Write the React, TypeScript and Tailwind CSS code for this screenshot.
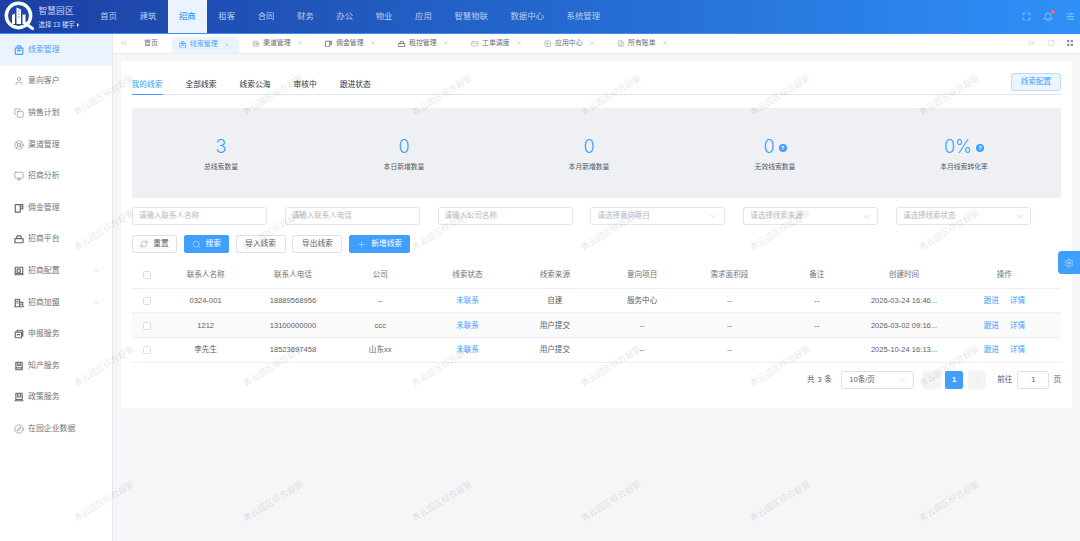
import React from "react";
import { User, Copy, LifeBuoy, Monitor, ChevronDown, Compass, X, ChevronsLeft, ChevronsRight, RotateCw, RefreshCw, Search, Plus, ChevronLeft, ChevronRight, Maximize, Bell, SlidersHorizontal, Settings, LayoutGrid, FileText, Grid2x2, CreditCard } from "lucide-react";

function mk(d: string) {
  return function Ic({ size = 10, strokeWidth = 1.2, className = "" }: { size?: number; strokeWidth?: number; className?: string }) {
    return (
      <svg width={size} height={size} viewBox="0 0 16 16" fill="none" stroke="currentColor" strokeWidth={strokeWidth * 1.6} strokeLinecap="round" strokeLinejoin="round" className={className}>
        <path d={d} />
      </svg>
    );
  };
}
const BoxIc = mk("M2 5h12v9a1 1 0 0 1-1 1H3a1 1 0 0 1-1-1zM5 5V2.5A1 1 0 0 1 6 1.5h4a1 1 0 0 1 1 1V5M8 4v5M5.5 9h5");
const PageIc = mk("M2 2.5h8v12H2zM10 2.5h4v7h-4M10 6h3");
const TrayIc = mk("M1.5 7.5h13V14h-13zM4 7.5L5 3h6l1 4.5");
const CfgIc = mk("M2 2h12v12H2zM5 5h5v5H5zM2 12h12");
const BldIc = mk("M2 14V2h7v12M9 7h5v7M1 14h14M4.5 5h2M4.5 8h2M11 10h1");
const StackIc = mk("M2 5h10v9H2zM5 5V2h9v9h-2M5 9h4");
const BookIc = mk("M3 2h10v12H3zM6 2v5h4V2M3 11h10");
const BookIc2 = mk("M3 2h10v10H3zM6 2v6h4V2M1.5 14h13");

const nav = ["首页","建筑","招商","租客","合同","财务","办公","物业","应用","智慧物联","数据中心","系统管理"];
const side: [string, any, boolean?][] = [
  ["线索管理", BoxIc],["意向客户", User],["销售计划", Copy],["渠道管理", LifeBuoy],["招商分析", Monitor],["佣金管理", PageIc],["招商平台", TrayIc],["招商配置", CfgIc, true],["招商加盟", BldIc, true],["申报服务", StackIc],["知产服务", BookIc],["政策服务", BookIc2],["在园企业数据", Compass],
];
const tabs: [string, any][] = [["渠道管理", LifeBuoy],["佣金管理", PageIc],["租控管理", TrayIc],["工单调度", CreditCard],["应用中心", Grid2x2],["所有账单", FileText]];
const rows = [
  ["0324-001","18889568956","--","未联系","自建","服务中心","--","--","2026-03-24 16:46..."],
  ["1212","13100000000","ccc","未联系","用户提交","--","--","--","2026-03-02 09:16..."],
  ["李先生","18523697458","山东xx","未联系","用户提交","--","--","","2025-10-24 16:13..."],
];
const heads = ["联系人名称","联系人电话","公司","线索状态","线索来源","意向项目","需求面积段","备注","创建时间","操作"];
const wmX = [104,273,442,611,780,949];
const wmY = [95,230,366,501];

function Logo() {
  return (
    <svg width="31" height="31" viewBox="0 0 31 31" className="shrink-0">
      <circle cx="14.5" cy="14.5" r="12.2" fill="#1d47ad" stroke="#fff" strokeWidth="3.4" />
      <path d="M21.5 22.5l7 5" stroke="#fff" strokeWidth="3.2" strokeLinecap="round" />
      <path d="M8 23v-9l3-1.5V23zM12.5 23V6.5l4.5 2V23zM18.5 23v-9.5h3V23z" fill="#fff" />
      <path d="M14 10h1.6M14 13h1.6M14 16h1.6" stroke="#1d47ad" strokeWidth="0.7" />
    </svg>
  );
}

function Field({ text, select }: { text: string; select?: boolean }) {
  return (
    <div className="w-[135px] h-[18px] border border-[#e2e4ea] rounded-[3px] bg-white flex items-center justify-between pl-[6px] pr-[6px] text-[7.5px] text-[#b4b8c0]">
      <span>{text}</span>
      {select && <ChevronDown size={9} strokeWidth={1.2} className="text-[#a8abb2]" />}
    </div>
  );
}

function Stat({ n, label, help }: { n: string; label: string; help?: boolean }) {
  return (
    <div className="flex flex-col items-center">
      <div className="flex items-center h-[24px]">
        <span className="font-[Inter] font-light text-[18px] leading-[24px] text-[#409eff]">{n}</span>
        {help && <span className="ml-[4px] mt-[2px] w-[8px] h-[8px] rounded-full bg-[#409eff] text-white text-[6px] leading-[8px] text-center font-bold">?</span>}
      </div>
      <div className="text-[6.8px] leading-[10px] mt-[3px] text-[#555a63]">{label}</div>
    </div>
  );
}

function Btn({ w, children, primary }: { w: string; children: React.ReactNode; primary?: boolean }) {
  return (
    <div className={`${w} h-[18px] rounded-[2px] border flex items-center justify-center gap-[5px] text-[7.7px] ${primary ? "bg-[#409eff] border-[#409eff] text-white" : "bg-white border-[#e0e2e8] text-[#5c6068]"}`}>{children}</div>
  );
}

function Box() {
  return <span className="inline-block w-[8px] h-[8px] border border-[#dcdfe6] rounded-[1.5px] bg-white align-middle" />;
}

export default function App() {
  return (
    <div className="relative w-[1080px] h-[541px] overflow-hidden bg-[#f5f6f8] flex flex-col text-[#5c6068]" style={{ fontFamily: '"Liberation Sans","Noto Sans CJK SC",sans-serif' }}>
      <header className="h-[34px] shrink-0 flex items-stretch bg-gradient-to-r from-[#1b3fa3] to-[#2f90f8] border-b border-[#3d8ef5]">
        <div className="w-[89px] shrink-0 flex items-center pl-[4px] gap-[3.5px]">
          <Logo />
          <div className="flex flex-col pt-[2px]">
            <span className="text-[8.6px] leading-[11px] text-[#c6d4f2] tracking-[0.2px]">智慧园区</span>
            <span className="text-[6.4px] leading-[10px] mt-[3px] text-[#d5e0f6] flex items-center">选择 13 楼宇<span className="ml-[2px] w-0 h-0 border-y-[2px] border-y-transparent border-l-[2.5px] border-l-white" /></span>
          </div>
        </div>
        <nav className="flex items-stretch">
          {nav.map((n) => (
            <div key={n} className={`px-[11.3px] flex items-center text-[8.4px] ${n === "招商" ? "bg-[#eaf3fe] text-[#3a9bff] font-medium" : "text-[#bccdf0]"}`}>{n}</div>
          ))}
        </nav>
        <div className="ml-auto flex items-center gap-[12.5px] pr-[5.5px] text-[#e4f0ff]">
          <Maximize size={9} strokeWidth={1.5} />
          <span className="relative">
            <Bell size={10} strokeWidth={1.3} className="block" />
            <span className="absolute -top-[2px] -right-[1.5px] w-[4px] h-[4px] rounded-full bg-[#f56c6c]" />
          </span>
          <SlidersHorizontal size={9} strokeWidth={1.3} />
        </div>
      </header>

      <div className="flex flex-1 min-h-0">
        <aside className="w-[113px] shrink-0 bg-white border-r border-[#e6e8ee] flex flex-col">
          {side.map(([t, I, arrow], i) => (
            <div key={t} className={`h-[31.6px] shrink-0 flex items-center pl-[14px] pr-[11px] text-[7.9px] ${i === 0 ? "bg-[#eaf3fe] text-[#4aa3ff]" : "text-[#70747c]"}`}>
              <I size={10} strokeWidth={1.2} className={`shrink-0 mr-[4px] ${i === 0 ? "text-[#4aa3ff]" : "text-[#666a72]"}`} />
              <span>{t}</span>
              {arrow && <ChevronDown size={9} strokeWidth={1.1} className="ml-auto text-[#a0a4ac]" />}
            </div>
          ))}
        </aside>

        <main className="flex-1 min-w-0 flex flex-col">
          <div className="h-[19.5px] shrink-0 bg-white border-b border-[#eceef2] flex items-end text-[6.9px] text-[#6a6e76]">
            <div className="w-[31px] h-full pl-[6px] flex items-center shrink-0"><ChevronsLeft size={10} strokeWidth={1.2} className="text-[#a4a8b0]" /></div>
            <div className="h-full flex items-center w-[28px] shrink-0">首页</div>
            <div className="h-[16px] w-[67px] shrink-0 rounded-t-[5px] bg-[#eaf3fe] text-[#4aa3ff] flex items-center pl-[7px]">
              <BoxIc size={7.5} strokeWidth={1} className="mr-[3.5px]" />
              <span>线索管理</span>
              <X size={6} strokeWidth={1} className="ml-[6px]" />
            </div>
            {tabs.map(([t, I]) => (
              <div key={t} className="h-full w-[73px] shrink-0 flex items-center pl-[13px]">
                <I size={7.5} strokeWidth={1.1} className="mr-[3.5px] shrink-0" />
                <span>{t}</span>
                <X size={6} strokeWidth={1.1} className="ml-[6px] text-[#777]" />
              </div>
            ))}
            <div className="ml-auto h-full flex items-center gap-[11px] pr-[6px] text-[#a4a8b0]">
              <ChevronsRight size={10} strokeWidth={1.2} />
              <RotateCw size={8} strokeWidth={1.1} />
              <LayoutGrid size={8} strokeWidth={0} fill="#8a8e96" />
            </div>
          </div>

          <div className="flex-1 min-h-0 pt-[7.5px] pl-[8px] pr-[8px]">
            <div className="bg-white w-[951px] h-[347px] rounded-[2px] pt-[12px] pl-[11px] pr-[11px]">
              <div className="flex h-[22px] items-start justify-between border-b border-[#dfe4ec]">
                <div className="flex gap-[23px] text-[7.75px] text-[#303338] pt-[6px] -ml-[0.5px]">
                  {["我的线索","全部线索","线索公海","审核中","跟进状态"].map((t, i) => (
                    <div key={t} className={`h-[16px] leading-[12px] ${i === 0 ? "text-[#409eff] border-b-[1.5px] border-[#409eff]" : ""}`}>{t}</div>
                  ))}
                </div>
                <div className="w-[50px] h-[18px] bg-[#ecf5ff] border border-[#bcdcff] rounded-[3px] text-[#409eff] text-[7.6px] flex items-center justify-center">线索配置</div>
              </div>

              <div className="mt-[13px] h-[90px] bg-[#eff0f4] grid grid-cols-[178px_188px_182px_190px_188px] items-center">
                <Stat n="3" label="总线索数量" />
                <Stat n="0" label="本日新增数量" />
                <Stat n="0" label="本月新增数量" />
                <Stat n="0" label="无效线索数量" help />
                <Stat n="0%" label="本月线索转化率" help />
              </div>

              <div className="mt-[9px] flex gap-[17.8px]">
                <Field text="请输入联系人名称" />
                <Field text="请输入联系人电话" />
                <Field text="请输入公司名称" />
                <Field text="请选择意向项目" select />
                <Field text="请选择线索来源" select />
                <Field text="请选择线索状态" select />
              </div>

              <div className="mt-[10px] flex gap-[6.8px]">
                <Btn w="w-[45px]"><RefreshCw size={8} strokeWidth={1.1} />重置</Btn>
                <Btn w="w-[45px]" primary><Search size={9} strokeWidth={1.1} />搜索</Btn>
                <Btn w="w-[50px]">导入线索</Btn>
                <Btn w="w-[50px]">导出线索</Btn>
                <Btn w="w-[61px]" primary><Plus size={9} strokeWidth={1.1} />新增线索</Btn>
              </div>

              <table className="mt-[9px] w-[929px] table-fixed text-[7.6px] text-center">
                <colgroup>
                  <col className="w-[30px]" />
                  {Array.from({ length: 9 }).map((_, i) => <col key={i} className="w-[87.3px]" />)}
                  <col />
                </colgroup>
                <thead>
                  <tr className="h-[26px] border-b border-[#ebeef5] text-[#707479]">
                    <th className="font-normal"><Box /></th>
                    {heads.map((h) => <th key={h} className="font-normal">{h}</th>)}
                  </tr>
                </thead>
                <tbody>
                  {rows.map((r, i) => (
                    <tr key={i} className={`h-[24.8px] border-b border-[#ebeef5] text-[#5c6068] ${i === 1 ? "bg-[#fafafa]" : ""}`}>
                      <td><Box /></td>
                      {r.map((c, j) => <td key={j} className={j === 3 ? "text-[#409eff]" : ""}>{c}</td>)}
                      <td className="text-[#409eff]"><span className="mr-[11px]">跟进</span><span>详情</span></td>
                    </tr>
                  ))}
                </tbody>
              </table>

              <div className="mt-[8px] flex items-center justify-end h-[18px] text-[7.6px] text-[#5c6068]">
                <span className="mr-[9px] tracking-[0.3px]">共 3 条</span>
                <div className="w-[73px] h-[18px] border border-[#dcdfe6] rounded-[3px] flex items-center justify-between pl-[7px] pr-[6px] mr-[9px]"><span>10条/页</span><ChevronDown size={9} strokeWidth={1} className="text-[#a8abb2]" /></div>
                <div className="w-[18px] h-[18px] bg-[#f4f4f5] rounded-[2px] flex items-center justify-center mr-[4px]"><ChevronLeft size={7} strokeWidth={1} className="text-[#c0c4cc]" /></div>
                <div className="w-[18px] h-[18px] bg-[#409eff] text-white rounded-[2px] flex items-center justify-center font-bold mr-[5px]">1</div>
                <div className="w-[18px] h-[18px] bg-[#f4f4f5] rounded-[2px] flex items-center justify-center mr-[11px]"><ChevronRight size={7} strokeWidth={1} className="text-[#c0c4cc]" /></div>
                <span className="mr-[5px]">前往</span>
                <div className="w-[32px] h-[18px] border border-[#dcdfe6] rounded-[3px] flex items-center justify-center mr-[4px]">1</div>
                <span>页</span>
              </div>
            </div>
          </div>
        </main>
      </div>

      <div className="absolute left-[1058px] top-[251px] w-[22px] h-[23px] rounded-l-[4px] bg-[#409eff] flex items-center justify-center">
        <Settings size={10} strokeWidth={1.1} className="text-white" />
      </div>

      <div className="absolute inset-0 pointer-events-none overflow-hidden">
        {wmY.map((y) => wmX.map((x) => (
          <span key={`${x}-${y}`} className="absolute text-[8.6px] leading-[10px] text-black/[0.13] whitespace-nowrap -translate-x-1/2 -translate-y-1/2 -rotate-[32deg]" style={{ left: x, top: y }}>青云园区综合超管</span>
        )))}
      </div>
    </div>
  );
}
